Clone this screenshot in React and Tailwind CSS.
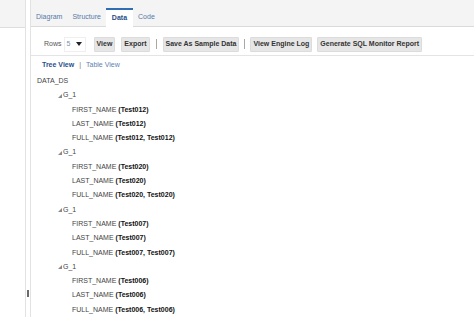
import React from 'react';

const groups = [
    { first: 'Test012', last: 'Test012' },
    { first: 'Test020', last: 'Test020' },
    { first: 'Test007', last: 'Test007' },
    { first: 'Test006', last: 'Test006' },
];

const tabs = ['Diagram', 'Structure', 'Data', 'Code'];

const Btn = ({ children }) => (
    <div className="h-[15px] px-[2px] flex items-center bg-[#e6e6e6] border border-[#dcdcdc] rounded-[1px] font-bold text-[#333] whitespace-nowrap">
        {children}
    </div>
);

const Sep = () => <div className="w-px h-[10px] bg-[#a8a8a8]" />;

const Field = ({ name, value }) => (
    <div className="pl-[41px] whitespace-nowrap">
        <span className="text-[#444]">{name} </span>
        <span className="font-bold text-[#111]">({value})</span>
    </div>
);

const App = () => {
    return (
        <div className="w-[474px] h-[317px] flex bg-white overflow-hidden font-['Liberation_Sans',Arial,sans-serif] text-[7px]">
            {/* left collapsed panel */}
            <div className="w-[26px] border-r border-[#e2e2e2] flex flex-col">
                <div className="h-[28px] bg-[#f4f4f4] border-b border-[#dedede]" />
            </div>

            {/* splitter */}
            <div className="w-[4px] flex flex-col items-center pt-[290px]">
                <div className="w-[2px] h-[7px] bg-[#6b6b6b]" />
            </div>

            {/* main */}
            <div className="flex-1 flex flex-col border-l border-[#e2e2e2]">
                <div className="h-[28px] bg-[#f4f4f4] border-b border-[#dadada] flex items-end">
                    {tabs.map(t => t === 'Data' ? (
                        <div key={t} className="h-[19px] -mb-px px-[6px] bg-white border-t-2 border-[#2f6db5] flex items-center font-bold text-[#1f4f86]">
                            {t}
                        </div>
                    ) : (
                        <div key={t} className="h-[18px] px-[5px] flex items-center text-[#557aa8]">
                            {t}
                        </div>
                    ))}
                </div>

                <div className="pt-[10px] pb-[3px] pl-[13px] border-b border-[#e4e4e4] flex items-center">
                    <span className="text-[#555]">Rows</span>
                    <div className="ml-[2px] w-[22px] h-[15px] bg-white border border-[#efefef] flex items-center justify-between pl-[2px] pr-[3px]">
                        <span className="text-[#7c93b0]">5</span>
                        <svg width="6" height="4" viewBox="0 0 6 4"><path d="M0 0h6L3 4z" fill="#222" /></svg>
                    </div>
                    <div className="ml-[8px] flex items-center gap-[6px]">
                        <Btn>View</Btn>
                        <Btn>Export</Btn>
                        <Sep />
                        <Btn>Save As Sample Data</Btn>
                    </div>
                    <div className="ml-[5px] flex items-center gap-[5px]">
                        <Sep />
                        <Btn>View Engine Log</Btn>
                        <Btn>Generate SQL Monitor Report</Btn>
                    </div>
                </div>

                <div className="mt-[4px] pl-[11px] h-[10px] flex items-center gap-[5px]">
                    <span className="font-bold text-[#1f4e8c]">Tree View</span>
                    <span className="text-[#777]">|</span>
                    <span className="text-[#5f82b0]">Table View</span>
                </div>

                <div className="mt-[4px] leading-[14.3px]">
                    <div className="pl-[6px] text-[#444]">DATA_DS</div>
                    {groups.map((g, i) => (
                        <React.Fragment key={i}>
                            <div className="pl-[27px] flex items-center text-[#444]">
                                <svg width="4" height="4" viewBox="0 0 4 4" className="mr-[1px] mt-[1px]"><path d="M4 0v4H0z" fill="#8a8a8a" /></svg>
                                <span>G_1</span>
                            </div>
                            <Field name="FIRST_NAME" value={g.first} />
                            <Field name="LAST_NAME" value={g.last} />
                            <Field name="FULL_NAME" value={`${g.first}, ${g.last}`} />
                        </React.Fragment>
                    ))}
                </div>
            </div>
        </div>
    );
};

export default App;
